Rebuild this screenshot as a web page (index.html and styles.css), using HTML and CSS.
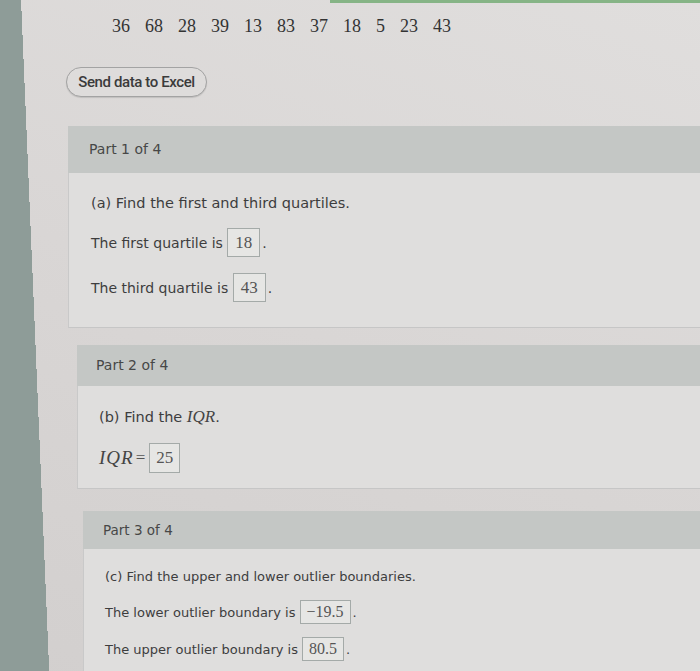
FILE: index.html
```html
<!DOCTYPE html>
<html lang="en">
<head>
    <meta charset="UTF-8">
    <meta name="viewport" content="width=device-width, initial-scale=1.0">
    <title>Quartiles and outliers</title>
    <link rel="stylesheet" href="styles.css">
</head>
<body>
    <main class="worksheet">
        <p class="data-row">
            <span>36</span><span>68</span><span>28</span><span>39</span><span>13</span><span>83</span><span>37</span><span>18</span><span>5</span><span>23</span><span>43</span>
        </p>

        <button class="excel-btn">Send data to Excel</button>

        <section class="part part-1">
            <h2 class="part-head">Part 1 of 4</h2>
            <div class="part-body">
                <p class="question">(a) Find the first and third quartiles.</p>
                <p class="answer">The first quartile is <span class="ans-box">18</span>.</p>
                <p class="answer">The third quartile is <span class="ans-box">43</span>.</p>
            </div>
        </section>

        <section class="part part-2">
            <h2 class="part-head">Part 2 of 4</h2>
            <div class="part-body">
                <p class="question">(b) Find the <i class="math">IQR</i>.</p>
                <p class="answer"><i class="math math-lg">IQR</i><span class="eq">=</span><span class="ans-box">25</span></p>
            </div>
        </section>

        <section class="part part-3">
            <h2 class="part-head">Part 3 of 4</h2>
            <div class="part-body">
                <p class="question">(c) Find the upper and lower outlier boundaries.</p>
                <p class="answer">The lower outlier boundary is <span class="ans-box">&minus;19.5</span>.</p>
                <p class="answer">The upper outlier boundary is <span class="ans-box">80.5</span>.</p>
            </div>
        </section>
    </main>
</body>
</html>
```

FILE: styles.css
```css
html, body {
    margin: 0;
    min-height: 671px;
}

body {
    overflow: hidden;
    font-family: "DejaVu Sans", Verdana, sans-serif;
    color: #3d3d3d;
    /* green rim at the top, monitor bezel on the left, screen glow */
    background:
        linear-gradient(to right, transparent 330px, #86b486 330px) top / 100% 3px no-repeat,
        linear-gradient(87.6deg, #8e9c98 50px, transparent 50px),
        linear-gradient(200deg, #e0dedd 0%, #d9d6d5 50%, #d2cfce 100%);
}

.worksheet {
    padding-top: 15px;
}

.data-row {
    display: flex;
    gap: 15px;
    margin: 0 0 0 112px;
    font-family: "Liberation Serif", "Times New Roman", serif;
    font-size: 18px;
    line-height: 22px;
    color: #333;
}

.excel-btn {
    display: block;
    margin: 30px 0 0 66px;
    width: 141px;
    height: 30px;
    padding: 0;
    border: 1px solid #a3a3a3;
    border-radius: 15px;
    background: #dedcdb;
    box-shadow: 0 1px 1px rgba(0, 0, 0, 0.12);
    font-family: Roboto, "Liberation Sans", sans-serif;
    font-size: 15px;
    font-weight: 500;
    letter-spacing: -0.4px;
    color: #3b3b3b;
}

.part-head {
    margin: 0;
    background: #c4c7c5;
    font-size: 14px;
    font-weight: normal;
    color: #474747;
}

.part-body {
    background: #dfdedd;
    border-left: 1px solid #c9c9c9;
    border-bottom: 1px solid #c6c6c6;
}

.part-body p {
    margin: 0;
    font-size: 14px;
}

.part-body .question {
    line-height: 20px;
    font-size: 14.5px;
}

.answer {
    display: flex;
    align-items: center;
    white-space: pre;
}

.ans-box {
    display: inline-flex;
    align-items: center;
    justify-content: center;
    box-sizing: border-box;
    margin-right: 2px;
    padding: 0 7px;
    border: 1px solid #a4aaa8;
    background: #e6e6e4;
    font-family: "Liberation Serif", "Times New Roman", serif;
    font-size: 17px;
    color: #555;
}

.math {
    font-family: "Liberation Serif", "Times New Roman", serif;
    font-size: 17px;
    color: #444;
}

.math-lg {
    font-size: 19px;
    letter-spacing: 1px;
}

.eq {
    margin: 0 4px 0 2px;
    font-family: "Liberation Serif", serif;
    font-size: 17px;
    color: #555;
}

/* part 1 */
.part-1 {
    margin: 29px 0 0 68px;
}

.part-1 .part-head {
    height: 47px;
    line-height: 47px;
    padding-left: 21px;
}

.part-1 .part-body {
    padding: 20px 0 25px 22px;
}

.part-1 .answer {
    margin-top: 15px;
}

.part-1 .answer + .answer {
    margin-top: 16px;
}

.part-1 .ans-box {
    height: 29px;
}

/* part 2 */
.part-2 {
    margin: 17px 0 0 77px;
}

.part-2 .part-head {
    height: 41px;
    line-height: 41px;
    padding-left: 19px;
}

.part-2 .part-body {
    padding: 21px 0 15px 21px;
}

.part-2 .answer {
    margin-top: 16px;
}

.part-2 .ans-box {
    height: 30px;
    padding: 0 6px;
}

/* part 3 */
.part-3 {
    margin: 22px 0 0 83px;
}

.part-3 .part-head {
    height: 38px;
    line-height: 38px;
    padding-left: 20px;
    font-size: 13.5px;
}

.part-3 .part-body {
    padding: 18px 0 30px 21px;
}

.part-3 .part-body p {
    font-size: 13px;
}

.part-3 .answer {
    margin-top: 13px;
}

.part-3 .ans-box {
    height: 24px;
    padding: 0 6px;
    font-size: 16px;
}
```
